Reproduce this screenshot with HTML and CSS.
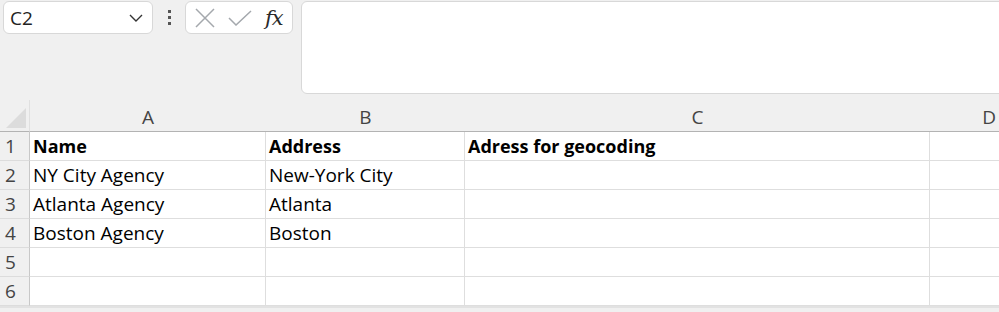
FILE: index.html
```html
<!DOCTYPE HTML>
<html>
<head>
<meta charset="utf-8" />
<title>Sheet</title>
<link rel="stylesheet" href="styles.css">
</head>

<body>
<div class="toolbar">
	<div class="namebox">
		<span class="ref">C2</span>
		<svg class="chev" width="16" height="10" viewBox="0 0 16 10"><path d="M2 2 L8 8 L14 2" fill="none" stroke="#333" stroke-width="1.4"/></svg>
	</div>
	<div class="dots"><i></i><i></i><i></i></div>
	<div class="funcs">
		<svg width="22" height="20" viewBox="0 0 22 20"><path d="M2 1 L20 19 M20 1 L2 19" fill="none" stroke="#a4a8ad" stroke-width="1.5"/></svg>
		<svg width="24" height="16" viewBox="0 0 24 16"><path d="M1 8 L8 15 L23 1" fill="none" stroke="#a4a8ad" stroke-width="1.5"/></svg>
		<span class="fx">fx</span>
	</div>
	<div class="formula"></div>
</div>

<div class="sheet">
	<div class="corner"><span class="tri"></span></div>
	<div class="colhead">A</div>
	<div class="colhead">B</div>
	<div class="colhead">C</div>
	<div class="colhead last">D</div>

	<div class="rowhead">1</div>
	<div class="cell bold">Name</div>
	<div class="cell bold">Address</div>
	<div class="cell bold">Adress for geocoding</div>
	<div class="cell last"></div>

	<div class="rowhead">2</div>
	<div class="cell">NY City Agency</div>
	<div class="cell">New-York City</div>
	<div class="cell"></div>
	<div class="cell last"></div>

	<div class="rowhead">3</div>
	<div class="cell">Atlanta Agency</div>
	<div class="cell">Atlanta</div>
	<div class="cell"></div>
	<div class="cell last"></div>

	<div class="rowhead">4</div>
	<div class="cell">Boston Agency</div>
	<div class="cell">Boston</div>
	<div class="cell"></div>
	<div class="cell last"></div>

	<div class="rowhead">5</div>
	<div class="cell"></div>
	<div class="cell"></div>
	<div class="cell"></div>
	<div class="cell last"></div>

	<div class="rowhead">6</div>
	<div class="cell"></div>
	<div class="cell"></div>
	<div class="cell"></div>
	<div class="cell last"></div>
</div>
</body>
</html>
```

FILE: styles.css
```css
body { background: #f0f0f0; margin: 0; font-family: "Open Sans", "Noto Sans", sans-serif; color: #000; overflow: hidden; }

.toolbar { display: flex; align-items: flex-start; height: 100px; padding: 1px 0 0 3px; box-sizing: border-box; }
	.namebox {
		width: 150px; height: 33px; box-sizing: border-box;
		background: #fff; border: 1px solid #d8d8d8; border-radius: 6px;
		display: flex; align-items: center; justify-content: space-between;
		padding: 0 8px 0 6px;
	}
		.namebox .ref { font-size: 19px; color: #222; }
	.dots { width: 32px; height: 33px; display: flex; flex-direction: column; align-items: center; justify-content: center; gap: 3px; }
		.dots i { display: block; width: 3px; height: 3px; background: #555; }
	.funcs {
		width: 108px; height: 33px; box-sizing: border-box;
		background: #fff; border: 1px solid #d8d8d8; border-radius: 6px;
		display: flex; align-items: center; gap: 12px; padding: 0 6px 0 8px;
	}
		.funcs .fx { font-family: "DejaVu Serif", "Liberation Serif", serif; font-style: italic; font-size: 21px; color: #2a2a2a; margin-left: 1px; letter-spacing: -1px; }
	.formula {
		flex: 1; height: 91px; margin-left: 8px; margin-right: -6px;
		background: #fff; border: 1px solid #d8d8d8; border-radius: 6px;
	}

.sheet {
	display: grid;
	grid-template-columns: 30px 236px 199px 465px 1fr;
	grid-template-rows: 32px repeat(6, 29px);
	background: #fff;
	border-bottom: 2px solid #e2e2e2;
}
	.corner { background: #f0f0f0; border-bottom: 1px solid #b3b3b3; border-right: 1px solid #e0e0e0; position: relative; }
		.corner .tri {
			position: absolute; left: 6px; top: 8px; width: 0; height: 0;
			border-left: 20px solid transparent; border-bottom: 20px solid #dcdcdc;
		}
	.colhead {
		background: #f0f0f0; border-bottom: 1px solid #b3b3b3;
		display: flex; align-items: flex-end; justify-content: center;
		font-size: 19px; color: #444; line-height: 26px; padding-bottom: 1px;
		box-sizing: border-box; position: relative;
	}
		.colhead::after { content: ""; position: absolute; right: -1px; bottom: 0; height: 11px; border-right: 1px solid #d4d4d4; }
		.colhead.last { justify-content: flex-end; padding-right: 3px; }
	.rowhead {
		background: #f0f0f0; border-right: 1px solid #c8c8c8; border-bottom: 1px solid #dcdcdc;
		font-size: 19px; color: #444; padding-left: 5px; line-height: 29px; box-sizing: border-box;
	}
	.cell {
		border-right: 1px solid #dedede; border-bottom: 1px solid #dedede; box-sizing: border-box;
		font-size: 19px; line-height: 28px; padding-left: 3px; white-space: nowrap;
	}
		.cell.bold { font-size: 18px; font-weight: bold; }
		.cell.last { border-right: 0; }
```
